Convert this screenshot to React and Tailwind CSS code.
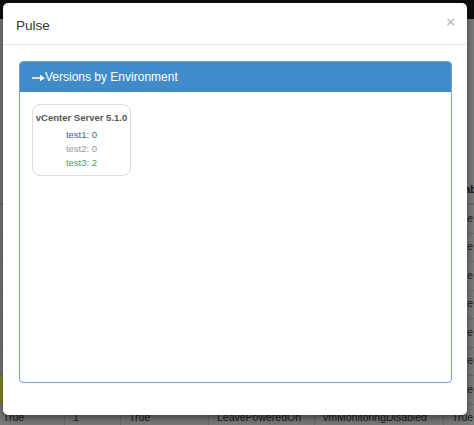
export default function App() {
  const rows = Array.from({ length: 8 });
  const cells = ["True", "1", "True", "LeavePoweredOn", "vmMonitoringDisabled", "True"];
  const headers = ["Enabled", "Priority", "Isolated", "Isolation", "Monitoring", "Enabled"];
  return (
    <div className="relative w-[474px] h-[425px] overflow-hidden bg-[#7b7b7b]" style={{ fontFamily: '"Liberation Sans", Arial, sans-serif' }}>
      <div className="h-[19px] bg-[#0d0d0d]" />
      <div className="pt-[157px] ml-[-5px] text-[10.5px] text-[#1a1a1a]">
        <div className="grid grid-cols-[69px_56px_88px_106px_129px_1fr] h-[29px] items-center border-b-2 border-[#6a6a6a] font-bold">
          {headers.map((h, i) => (
            <div key={i} className="px-[8px] h-full flex items-center whitespace-nowrap overflow-hidden">{h}</div>
          ))}
        </div>
        {rows.map((_, r) => (
          <div key={r} className="grid grid-cols-[69px_56px_88px_106px_129px_1fr] h-[28.5px] items-center border-b border-[#6c6c6c]">
            {cells.map((c, i) => (
              <div key={i} className={`px-[8px] h-full flex items-center whitespace-nowrap ${i > 0 ? "border-l border-[#6c6c6c]" : ""} ${r === 6 && i === 0 ? "bg-[#8a8626]" : ""}`}>{c}</div>
            ))}
          </div>
        ))}
      </div>

      <div className="absolute left-[3px] top-[3px] w-[464px] h-[412px] bg-white rounded-[5px] shadow-[0_3px_9px_rgba(0,0,0,0.5)] flex flex-col">
        <div className="h-[42px] border-b border-[#e5e5e5] pl-[13px] pr-[12px] flex items-start justify-between">
          <div className="text-[13.5px] text-[#333] leading-none mt-[16px]">Pulse</div>
          <div className="text-[15px] font-bold text-[#c4c4c4] leading-none mt-[11px]">×</div>
        </div>
        <div className="pl-[16px] pr-[15px] pt-[16px]">
          <div className="h-[322px] border border-[#6fa3d6] rounded-[4px] flex flex-col overflow-hidden">
            <div className="h-[30px] bg-[#428bca] text-white text-[12px] pl-[12px] flex items-center shrink-0">
              <svg width="13" height="8" viewBox="0 0 13 8" className="mr-[0px] mt-[1px]">
                <line x1="0" y1="4" x2="9" y2="4" stroke="white" strokeWidth="1.6" />
                <polygon points="8,0.8 13,4 8,7.2" fill="white" />
              </svg>
              <span>Versions by Environment</span>
            </div>
            <div className="pl-[12px] pt-[12px]">
              <div className="w-[99px] h-[72px] border border-[#dedede] rounded-[8px] flex flex-col items-center text-[9.5px] pt-[7px]">
                <div className="font-bold text-[#555] leading-[12px]">vCenter Server 5.1.0</div>
                <div className="text-[#33639a] leading-[14px] mt-[4px]">test1: 0</div>
                <div className="text-[#999] leading-[14px]">test2: 0</div>
                <div className="text-[#4e9e4e] leading-[14px]">test3: 2</div>
              </div>
            </div>
          </div>
        </div>
      </div>
    </div>
  );
}
